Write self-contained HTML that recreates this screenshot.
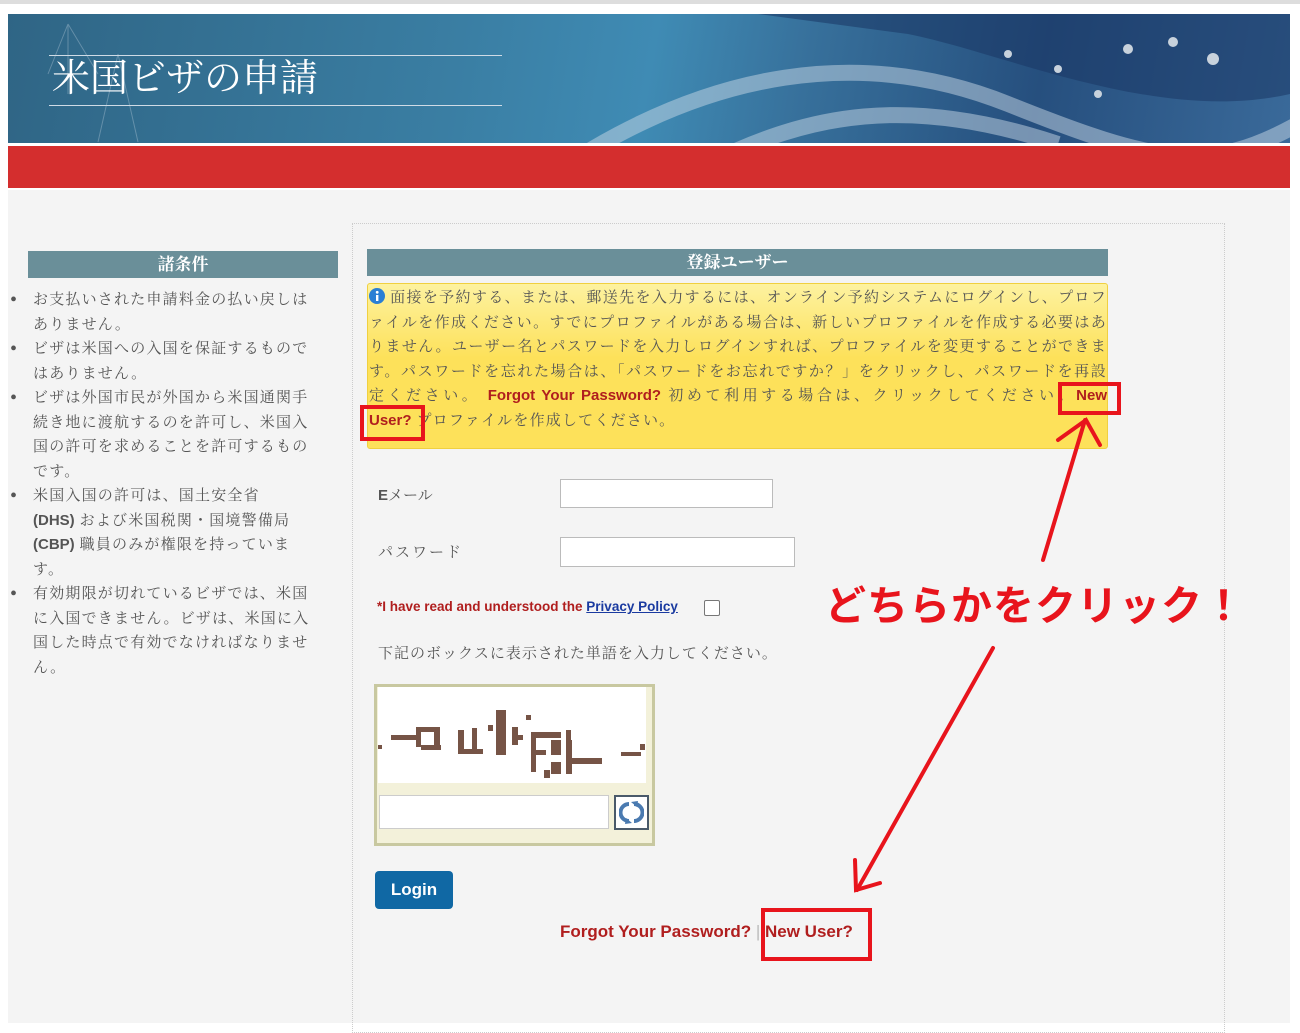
<!DOCTYPE html>
<html><head><meta charset="utf-8"><style>
*{margin:0;padding:0;box-sizing:border-box}
body{width:1300px;height:1023px;background:#fff;position:relative;overflow:hidden;font-family:"Liberation Serif","Noto Serif CJK SC",serif;color:#555}
.a{position:absolute}
.jp{font-family:"Liberation Serif","Noto Serif CJK SC",serif}
.sans{font-family:"Liberation Sans","Noto Sans CJK JP",sans-serif}
.red{color:#b01e1e;font-weight:bold;font-family:"Liberation Sans",sans-serif;letter-spacing:0}
.l{white-space:nowrap}
.j{text-align:justify;text-align-last:justify;text-justify:inter-character;width:738px;white-space:nowrap}
.b{position:absolute;left:0;font-size:20px;line-height:24px}
</style></head><body>
<div class="a" style="left:0;top:0;width:1300px;height:4px;background:#ddd"></div>
<div class="a" style="left:8px;top:14px;width:1282px;height:129px;background:linear-gradient(100deg,#2f6585 0%,#3a7ea3 35%,#3f8bb4 50%,#37709b 62%,#264f7e 80%,#3a6a9a 100%);overflow:hidden">
<svg width="1282" height="129" style="position:absolute;left:0;top:0">
<g fill="none" stroke="rgba(200,215,230,0.5)" stroke-width="16">
<path d="M560 150 C700 60 850 30 1000 90 S1200 160 1290 110"/>
<path d="M700 150 C800 100 900 80 1050 130"/>
</g>
<path d="M750 0 L1282 0 L1282 80 C1150 110 1000 40 900 20 Z" fill="rgba(25,55,100,0.55)"/>
<g fill="#c8d2dc"><circle cx="1120" cy="35" r="5"/><circle cx="1165" cy="28" r="5"/><circle cx="1205" cy="45" r="6"/><circle cx="1050" cy="55" r="4"/><circle cx="1090" cy="80" r="4"/><circle cx="1000" cy="40" r="4"/></g>
<g stroke="rgba(220,230,240,0.3)" stroke-width="1"><path d="M60 10 L40 60 M60 10 L90 60 M60 10 L60 80 M110 40 L90 128 M110 40 L130 128"/></g>
</svg>
<div class="a" style="left:41px;top:41px;width:453px;height:1px;background:#cfdbe6"></div>
<div class="a" style="left:41px;top:91px;width:453px;height:1px;background:#cfdbe6"></div>
<div class="a jp" style="left:44px;top:42px;font-size:38px;color:#fff;line-height:46px">米国ビザの申請</div>
</div>
<div class="a" style="left:8px;top:146px;width:1282px;height:42px;background:#d42e2e"></div>
<div class="a" style="left:8px;top:190px;width:1282px;height:833px;background:#f4f4f4"></div>
<div class="a" style="left:352px;top:223px;width:873px;height:810px;border:1px dotted #ccc"></div>

<div class="a" style="left:28px;top:251px;width:310px;height:27px;background:#6a8f99;color:#fff;font-weight:bold;font-size:17px;text-align:center;line-height:27px">諸条件</div>
<div class="a" style="left:10px;top:288px;font-size:15px;line-height:24.5px;color:#555;letter-spacing:1.2px">
<div style="position:relative;padding-left:23px" class="l"><span class="b">•</span>お支払いされた申請料金の払い戻しは<br>ありません。</div>
<div style="position:relative;padding-left:23px" class="l"><span class="b">•</span>ビザは米国への入国を保証するもので<br>はありません。</div>
<div style="position:relative;padding-left:23px" class="l"><span class="b">•</span>ビザは外国市民が外国から米国通関手<br>続き地に渡航するのを許可し、米国入<br>国の許可を求めることを許可するもの<br>です。</div>
<div style="position:relative;padding-left:23px" class="l"><span class="b">•</span>米国入国の許可は、国土安全省<br><b class="sans" style="letter-spacing:0">(DHS)</b> および米国税関・国境警備局<br><b class="sans" style="letter-spacing:0">(CBP)</b> 職員のみが権限を持っていま<br>す。</div>
<div style="position:relative;padding-left:23px" class="l"><span class="b">•</span>有効期限が切れているビザでは、米国<br>に入国できません。ビザは、米国に入<br>国した時点で有効でなければなりませ<br>ん。</div>
</div>

<div class="a" style="left:367px;top:249px;width:741px;height:27px;background:#6a8f99;color:#fff;font-weight:bold;font-size:17px;text-align:center;line-height:27px">登録ユーザー</div>
<div class="a" style="left:367px;top:283px;width:741px;height:166px;background:linear-gradient(#fdf2a0,#fde15a 45%,#fde15a);border:1px solid #f0d040;border-radius:3px;padding:2px 0 0 1px;font-size:15px;line-height:24.5px;color:#555;letter-spacing:1.2px">
<div class="j"><svg width="16" height="16" style="vertical-align:-2px"><circle cx="8" cy="8" r="8" fill="#2a7fd4"/><rect x="7" y="7" width="2.4" height="6" fill="#fff"/><circle cx="8.2" cy="4.3" r="1.4" fill="#fff"/></svg> 面接を予約する、または、郵送先を入力するには、オンライン予約システムにログインし、プロフ</div>
<div class="j">ァイルを作成ください。すでにプロファイルがある場合は、新しいプロファイルを作成する必要はあ</div>
<div class="j">りません。ユーザー名とパスワードを入力しログインすれば、プロファイルを変更することができま</div>
<div class="j">す。パスワードを忘れた場合は、「パスワードをお忘れですか？」をクリックし、パスワードを再設</div>
<div class="j">定ください。 <span class="red">Forgot Your Password?</span> 初めて利用する場合は、クリックしてください。<span class="red">New</span></div>
<div style="white-space:nowrap"><span class="red">User?</span> プロファイルを作成してください。</div>
</div>
<div class="a" style="left:1058px;top:382px;width:63px;height:33px;border:4px solid #e8141c"></div>
<div class="a" style="left:360px;top:405px;width:65px;height:36px;border:4px solid #e8141c"></div>

<div class="a" style="left:378px;top:484px;font-size:15px;color:#555"><b class="sans">E</b>メール</div>
<div class="a" style="left:560px;top:479px;width:213px;height:29px;background:#fff;border:1px solid #bbb"></div>
<div class="a" style="left:378px;top:541px;font-size:15px;color:#555;letter-spacing:2px">パスワード</div>
<div class="a" style="left:560px;top:537px;width:235px;height:30px;background:#fff;border:1px solid #bbb"></div>
<div class="a sans" style="left:377px;top:599px;font-size:13.5px;font-weight:bold;color:#b01e1e">*I have read and understood the <span style="color:#1a3aa0;text-decoration:underline">Privacy Policy</span></div>
<div class="a" style="left:704px;top:600px;width:16px;height:16px;border:1px solid #777;border-radius:2px;background:#fff"></div>
<div class="a" style="left:378px;top:642px;font-size:15px;color:#555;letter-spacing:1px">下記のボックスに表示された単語を入力してください。</div>

<div class="a" style="left:374px;top:684px;width:281px;height:162px;background:#f3f1da;border:3px solid #c8c8a0"></div>
<div class="a" style="left:378px;top:687px;width:268px;height:96px;background:#fff"></div>
<svg class="a" style="left:376px;top:700px" width="275" height="90"><g fill="#765446">
<rect x="15" y="35" width="28" height="5"/><rect x="40" y="27" width="24" height="5"/><rect x="40" y="27" width="5" height="20"/><rect x="58" y="27" width="6" height="22"/><rect x="45" y="45" width="20" height="5"/><rect x="82" y="30" width="6" height="24"/><rect x="82" y="49" width="25" height="5"/><rect x="96" y="28" width="5" height="25"/><rect x="112" y="25" width="5" height="6"/><rect x="120" y="10" width="10" height="45"/><rect x="136" y="27" width="6" height="18"/><rect x="142" y="35" width="5" height="5"/><rect x="150" y="15" width="5" height="5"/><rect x="155" y="32" width="5" height="40"/><rect x="155" y="32" width="30" height="6"/><rect x="160" y="50" width="10" height="5"/><rect x="175" y="40" width="10" height="15"/><rect x="168" y="70" width="6" height="8"/><rect x="190" y="30" width="5" height="10"/><rect x="190" y="40" width="6" height="34"/><rect x="196" y="58" width="30" height="6"/><rect x="175" y="62" width="10" height="12"/><rect x="245" y="52" width="20" height="4"/><rect x="264" y="44" width="5" height="6"/><rect x="2" y="45" width="4" height="4"/></g></svg>
<div class="a" style="left:379px;top:795px;width:230px;height:34px;background:#fff;border:1px solid #ccc"></div>
<div class="a" style="left:614px;top:795px;width:35px;height:35px;background:#fff;border:2px solid #4a5a6a"></div>
<svg class="a" style="left:619px;top:800px" width="25" height="25"><g fill="none" stroke="#4a7ab0" stroke-width="4"><path d="M10 4 A8.5 8.5 0 0 0 10 21"/><path d="M15 4 A8.5 8.5 0 0 1 15 21"/></g><path d="M7 18 L13 23 L6 24Z M18 7 L12 2 L19 1Z" fill="#4a7ab0"/></svg>

<div class="a sans" style="left:375px;top:871px;width:78px;height:38px;background:#1068a4;border-radius:4px;color:#fff;font-size:17px;font-weight:bold;text-align:center;line-height:38px">Login</div>
<div class="a sans" style="left:560px;top:922px;font-size:17px;font-weight:bold;color:#b01e1e">Forgot Your Password? <span style="color:#bbb;font-weight:normal">|</span> New User?</div>
<div class="a" style="left:761px;top:908px;width:111px;height:53px;border:4px solid #e8141c"></div>

<div class="a sans" style="left:825px;top:572px;font-size:41px;font-weight:bold;color:#e8141c;letter-spacing:1px">どちらかをクリック！</div>
<svg class="a" style="left:0;top:0" width="1300" height="1023"><g stroke="#e8141c" stroke-width="4" fill="none" stroke-linecap="round">
<path d="M1043 560 L1085 420"/><path d="M1058 440 L1086 420 L1100 445"/>
<path d="M993 648 L857 890"/><path d="M855 860 L856 890 L880 883"/>
</g></svg>
</body></html>
